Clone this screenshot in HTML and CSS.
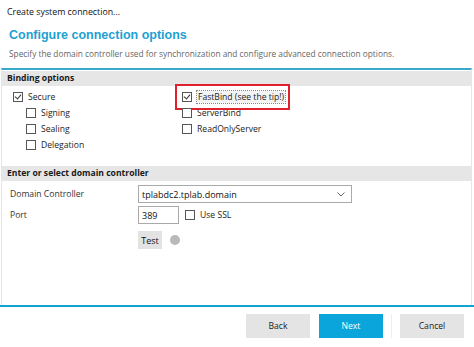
FILE: index.html
```html
<!DOCTYPE html>
<html lang="en">
<head>
  <meta charset="UTF-8">
  <title>Create system connection</title>
  <link rel="stylesheet" href="styles.css">
</head>
<body>
  <div class="wizard">
    <div class="caption">Create system connection...</div>
    <div class="intro">
      <h1>Configure connection options</h1>
      <p>Specify the domain controller used for synchronization and configure advanced connection options.</p>
    </div>
    <div class="panel">
      <div class="section-head">Binding options</div>
      <div class="binding">
        <div class="col">
          <label class="check"><span class="box checked"></span>Secure</label>
          <label class="check sub"><span class="box"></span>Signing</label>
          <label class="check sub"><span class="box"></span>Sealing</label>
          <label class="check sub"><span class="box"></span>Delegation</label>
        </div>
        <div class="col">
          <label class="check highlight"><span class="box checked"></span><span class="focus">FastBind (see the tip!)</span></label>
          <label class="check"><span class="box"></span>ServerBind</label>
          <label class="check"><span class="box"></span>ReadOnlyServer</label>
        </div>
      </div>
      <div class="section-head">Enter or select domain controller</div>
      <div class="dc">
        <div class="row">
          <span class="lbl">Domain Controller</span>
          <div class="select">tplabdc2.tplab.domain
            <svg width="8" height="5" viewBox="0 0 8 5"><path d="M0.5 0.5 L4 4 L7.5 0.5" fill="none" stroke="#666" stroke-width="1"/></svg>
          </div>
        </div>
        <div class="row">
          <span class="lbl">Port</span>
          <div class="input">389</div>
          <label class="check"><span class="box"></span>Use SSL</label>
        </div>
        <div class="row">
          <span class="lbl"></span>
          <button class="test">Test</button>
          <span class="dot"></span>
        </div>
      </div>
    </div>
    <div class="footer">
      <button class="btn">Back</button>
      <button class="btn primary">Next</button>
      <span class="sep"></span>
      <button class="btn">Cancel</button>
    </div>
  </div>
</body>
</html>
```

FILE: styles.css
```css
:root {
  --accent: #12a3d6;
  --rule: #3aaac8;
  --band: #e6e6e6;
  --text: #222;
}
body {
  margin: 0;
  background: #fff;
  font-family: 'Open Sans', 'Noto Sans', sans-serif;
  font-size: 8.6px;
  color: var(--text);
}
.wizard { width: 474px; height: 347px; display: flex; flex-direction: column; }
.caption { padding: 6px 7px 0; height: 14px; font-size: 8.8px; color: #111; }
.intro { padding: 8px 9px 0; height: 40px; box-sizing: border-box; }
.intro h1 {
  margin: 0;
  font-family: 'Liberation Sans', Arial, sans-serif;
  font-size: 12.5px;
  font-weight: 700;
  color: #1e9fd4;
  height: 18px;
}
.intro p { margin: 2px 0 0; color: #666; font-size: 8.3px; }
.panel {
  border-top: 2px solid var(--rule);
  margin-top: 8px;
  height: 235px;
  border-left: 1px solid #e6e6e6;
  border-right: 1px solid #e6e6e6;
  margin-left: 1px;
  margin-right: 2px;
  display: flex;
  flex-direction: column;
}
.section-head {
  background: var(--band);
  font-weight: 700;
  height: 15px;
  line-height: 15px;
  padding-left: 5px;
  margin-top: 1px;
  color: #1a1a1a;
}
.binding { display: flex; padding: 5px 0 0 11px; height: 79px; box-sizing: border-box; }
.col { display: flex; flex-direction: column; gap: 4px; }
.col:first-child { width: 169px; }
.check { display: flex; align-items: center; gap: 5px; height: 12px; }
.check.sub { padding-left: 13px; }
.box {
  width: 8px; height: 8px;
  border: 1px solid #555;
  background: #fff;
  position: relative;
  flex: none;
}
.box.checked::after {
  content: "";
  position: absolute;
  left: 2px; top: 0px;
  width: 3px; height: 5px;
  border: solid #333;
  border-width: 0 1px 1px 0;
  transform: rotate(40deg);
}
.highlight { position: relative; }
.highlight::before {
  content: "";
  position: absolute;
  left: -7px; top: -7px; right: -5px; bottom: -7px;
  border: 2px solid #e0202c;
}
.focus { outline: 1px dotted #888; padding: 0 1px; background: #f3f3f3; }
.dc { display: flex; flex-direction: column; padding: 4px 0 0 8px; gap: 3px; }
.row { display: flex; align-items: center; gap: 6px; }
.lbl { width: 122px; color: #333; }
.select {
  width: 203px; height: 16px;
  border: 1px solid #aaa;
  display: flex; align-items: center; justify-content: space-between;
  padding: 0 6px 0 3px;
  font-size: 9px;
  color: #111;
}
.input {
  width: 36px; height: 16px;
  border: 1px solid #aaa;
  display: flex; align-items: center;
  padding-left: 3px;
  font-size: 9px;
  color: #111;
}
.test {
  font: inherit;
  font-size: 9px;
  border: 0;
  background: #e3e3e3;
  height: 18px;
  width: 24px;
  padding: 0;
  margin-top: 4px;
  color: #111;
}
.dot { width: 10px; height: 10px; border-radius: 50%; background: #b9b9b9; margin-top: 4px; margin-left: 2px; }
.footer {
  border-top: 2px solid var(--accent);
  display: flex;
  justify-content: flex-end;
  align-items: center;
  gap: 9px;
  padding: 7px 10px 0 0;
}
.btn {
  font: inherit;
  width: 64px; height: 24px;
  border: 0;
  background: #e4e4e4;
  color: #222;
}
.btn.primary { background: #0aa5da; color: #fff; }
.sep { width: 1px; height: 24px; background: #eee; margin: 0 -1px 0 -1px; }
```
